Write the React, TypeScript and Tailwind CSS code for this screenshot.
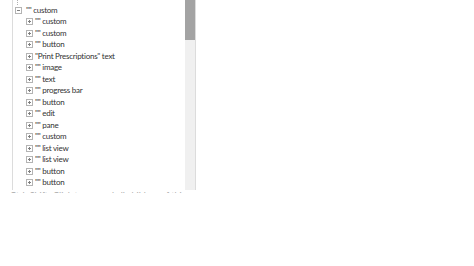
const children = [
  '"" custom',
  '"" custom',
  '"" button',
  '"Print Prescriptions" text',
  '"" image',
  '"" text',
  '"" progress bar',
  '"" button',
  '"" edit',
  '"" pane',
  '"" custom',
  '"" list view',
  '"" list view',
  '"" button',
  '"" button',
]

function Box({ minus }: { minus?: boolean }) {
  return (
    <svg width="7" height="7" viewBox="0 0 7 7" className="shrink-0">
      <rect x="0.5" y="0.5" width="6" height="6" fill="white" stroke="#b4b4b4" />
      <line x1="2" y1="3.5" x2="5" y2="3.5" stroke="#808080" />
      {!minus && <line x1="3.5" y1="2" x2="3.5" y2="5" stroke="#808080" />}
    </svg>
  )
}

export default function App() {
  return (
    <div className="w-[474px] h-[266px] bg-white overflow-hidden" style={{ fontFamily: 'Lato, "Noto Sans", sans-serif' }}>
      <div className="flex h-[190px] ml-[12px] w-[184px] border-l border-r border-[#dcdcdc]">
        <div className="flex-1 relative overflow-hidden text-[8px] tracking-[-0.25px] text-[#333] leading-[11.5px]">
          <div className="h-[4.5px] ml-[4px] border-l border-dotted border-[#b0b0b0]" />
          <div className="flex items-center gap-[4px] pl-[2px] h-[11.5px]">
            <Box minus />
            <span>"" custom</span>
          </div>
          {children.map((c, i) => (
            <div key={i} className="flex items-center gap-[2px] pl-[13px] h-[11.5px]">
              <Box />
              <span>{c}</span>
            </div>
          ))}
        </div>
        <div className="w-[10px] bg-[#f0f0f0] flex flex-col">
          <div className="h-[40px] bg-[#a3a3a3]" />
        </div>
      </div>
      <div className="h-[2px] overflow-hidden ml-[10px] w-[175px] mt-[1px]">
        <div className="text-[9px] leading-[9px] text-[#aaa] whitespace-nowrap">Ctrl+Shift+Click  to  expand  all  children  of  this  node  fully</div>
      </div>
    </div>
  )
}
